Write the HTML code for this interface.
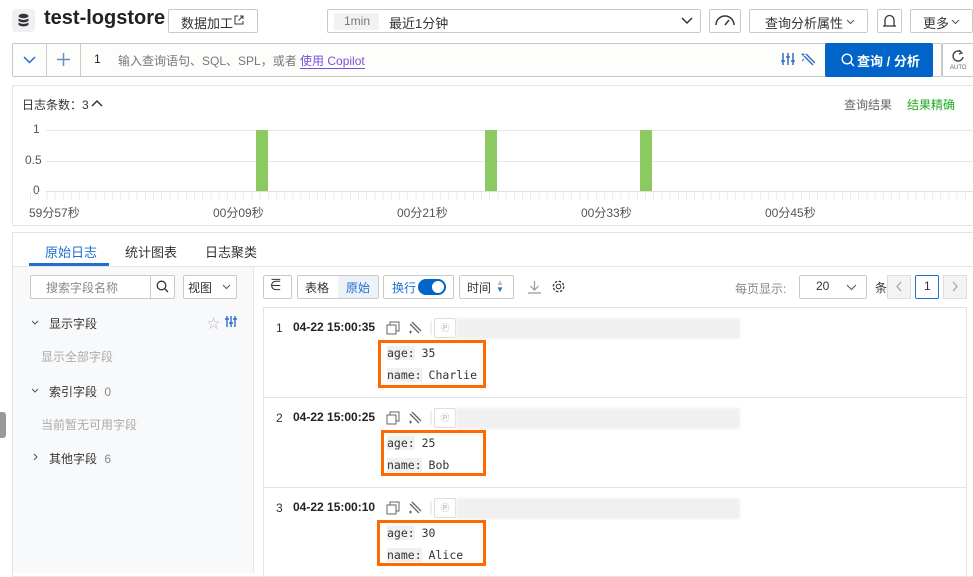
<!DOCTYPE html>
<html><head><meta charset="utf-8"><style>
*{box-sizing:border-box;margin:0;padding:0}
svg{display:block}
body{width:973px;height:573px;overflow:hidden;background:#fff;font-family:"Liberation Sans","Noto Sans CJK SC",sans-serif;font-size:12px;color:#333;position:relative}
.a{position:absolute}
.bx{position:absolute;border:1px solid #c9c9c9;background:#fff;border-radius:2px}
.t{position:absolute;white-space:nowrap}
.mono{font-family:"DejaVu Sans Mono","Liberation Mono",monospace;font-size:11.5px}
.k{background:#f0f0f0;color:#333}
.ob{position:absolute;border:3px solid #ff6a00}
.blur{position:absolute;background:#f0f0f0;filter:blur(1px);border-radius:2px}
</style></head><body>
<!-- header -->
<div class="a" style="left:12px;top:9px;width:23px;height:23px;background:#eef0f3;border-radius:4px"></div>
<svg class="a" style="left:17px;top:13px" width="13" height="15" viewBox="0 0 13 15"><ellipse cx="6.5" cy="3" rx="5" ry="2.2" fill="#333"/><path d="M1.5 5.5q5 3 10 0v2.5q-5 3-10 0zM1.5 9.5q5 3 10 0v2.5q-5 3-10 0z" fill="#333"/></svg>
<div class="t" style="left:44px;top:7px;font-size:20px;font-weight:bold;color:#222">test-logstore</div>
<div class="bx" style="left:168px;top:9px;width:90px;height:24px"></div>
<div class="t" style="left:181px;top:13px;font-size:13px">数据加工</div>
<svg class="a" style="left:234px;top:15px" width="10" height="10"><path d="M4 1H1v8h8V6M6 1h3v3M9 1L4.5 5.5" stroke="#333" fill="none"/></svg>
<div class="bx" style="left:327px;top:9px;width:374px;height:24px"></div>
<div class="a" style="left:334px;top:13px;width:45px;height:17px;background:#f2f2f2"></div>
<div class="t" style="left:344px;top:14px;font-size:12px;color:#777">1min</div>
<div class="t" style="left:389px;top:13px;font-size:13px">最近1分钟</div>
<svg class="a" style="left:681px;top:17px" width="12" height="8"><path d="M1 1l5 5 5-5" stroke="#333" stroke-width="1.5" fill="none"/></svg>
<div class="bx" style="left:709px;top:9px;width:32px;height:24px"></div>
<svg class="a" style="left:714px;top:13px" width="22" height="14"><path d="M2 12A9 9 0 0 1 20 12" stroke="#333" stroke-width="1.5" fill="none"/><path d="M11 12l4-5" stroke="#333" stroke-width="1.5"/></svg>
<div class="bx" style="left:749px;top:9px;width:119px;height:24px"></div>
<div class="t" style="left:765px;top:13px;font-size:13px">查询分析属性</div>
<svg class="a" style="left:846px;top:19px" width="9" height="6"><path d="M1 1l3.5 3.5L8 1" stroke="#555" fill="none"/></svg>
<div class="bx" style="left:877px;top:9px;width:25px;height:24px"></div>
<svg class="a" style="left:882px;top:13px" width="15" height="16"><path d="M3 13V7a4.5 4.5 0 0 1 9 0v6M1 13h13" stroke="#333" stroke-width="1.3" fill="none"/></svg>
<div class="bx" style="left:910px;top:9px;width:63px;height:24px"></div>
<div class="t" style="left:923px;top:13px;font-size:13px">更多</div>
<svg class="a" style="left:951px;top:19px" width="9" height="6"><path d="M1 1l3.5 3.5L8 1" stroke="#555" fill="none"/></svg>
<!-- query bar -->
<div class="bx" style="left:12px;top:43px;width:930px;height:34px;background:#fdfdfc"></div>
<div class="a" style="left:46px;top:44px;width:1px;height:32px;background:#ccc"></div>
<div class="a" style="left:80px;top:44px;width:1px;height:32px;background:#ccc"></div>
<svg class="a" style="left:23px;top:56px" width="13" height="8"><path d="M1 1l5.5 5.5L12 1" stroke="#1f6fd1" stroke-width="1.5" fill="none"/></svg>
<svg class="a" style="left:57px;top:53px" width="13" height="13"><path d="M6.5 0v13M0 6.5h13" stroke="#6b8cbf" stroke-width="1.5"/></svg>
<div class="t" style="left:94px;top:52px;font-size:12px;color:#223">1</div>
<div class="t" style="left:118px;top:52px;font-size:12px;color:#777">输入查询语句、SQL、SPL，或者 <span style="color:#7a4fd8;border-bottom:1px solid #7a4fd8">使用 Copilot</span></div>
<svg class="a" style="left:781px;top:52px" width="14" height="14"><path d="M2 1v12M7 1v12M12 1v12" stroke="#2f6fc6" stroke-width="1.5"/><path d="M0 9h4M5 5h4M10 9h4" stroke="#2f6fc6" stroke-width="1.5"/></svg>
<svg class="a" style="left:801px;top:52px" width="14" height="14"><path d="M3 4l9 9M5 2l9 9" stroke="#2f6fc6" stroke-width="1.5"/><path d="M1 9l2-2M2 1v3M0.5 2.5h3" stroke="#2f6fc6"/></svg>
<div class="a" style="left:825px;top:43px;width:108px;height:34px;background:#0064c8;border-radius:2px"></div>
<svg class="a" style="left:841px;top:53px" width="14" height="14"><circle cx="6" cy="6" r="4.8" stroke="#fff" stroke-width="1.4" fill="none"/><path d="M9.5 9.5L13 13" stroke="#fff" stroke-width="1.4"/></svg>
<div class="t" style="left:857px;top:51px;font-size:13px;color:#fff;font-weight:bold">查询 / 分析</div>
<div class="bx" style="left:942px;top:43px;width:40px;height:34px"></div>
<svg class="a" style="left:951px;top:49px" width="14" height="14"><path d="M11 4A5 5 0 1 0 12 8" stroke="#444" stroke-width="1.4" fill="none"/><path d="M8 1l3 3-3 1" stroke="#444" stroke-width="1.2" fill="none"/></svg>
<div class="t" style="left:950px;top:65px;font-size:6px;color:#666">AUTO</div>
<!-- chart -->
<div class="a" style="left:12px;top:85px;width:975px;height:141px;border:1px solid #e5e5e5"></div>
<div class="t" style="left:22px;top:96px;font-size:12px;color:#333">日志条数：3</div>
<svg class="a" style="left:91px;top:99px" width="12" height="8"><path d="M1 7l5-5 5 5" stroke="#333" stroke-width="1.5" fill="none"/></svg>
<div class="t" style="left:844px;top:96px;font-size:12px;color:#666">查询结果</div>
<div class="t" style="left:907px;top:96px;font-size:12px;color:#22aa22">结果精确</div>
<div class="t" style="left:33px;top:122px;color:#555">1</div>
<div class="t" style="left:25px;top:153px;color:#555">0.5</div>
<div class="t" style="left:33px;top:183px;color:#555">0</div>
<div class="a" style="left:46px;top:130px;width:927px;height:1px;background:#e8e8e8"></div>
<div class="a" style="left:46px;top:161px;width:927px;height:1px;background:#e8e8e8"></div>
<div class="a" style="left:46px;top:191px;width:927px;height:1px;background:#e0e0e0"></div>
<div class="a" style="left:30px;top:192px;width:943px;height:8px;background:repeating-linear-gradient(90deg,#eee 0 1px,transparent 1px 8.2px)"></div>
<div class="a" style="left:256px;top:130px;width:12px;height:61px;background:#8dc961"></div>
<div class="a" style="left:485px;top:130px;width:12px;height:61px;background:#8dc961"></div>
<div class="a" style="left:640px;top:130px;width:12px;height:61px;background:#8dc961"></div>
<div class="t" style="left:29px;top:204px;color:#555">59分57秒</div>
<div class="t" style="left:213px;top:204px;color:#555">00分09秒</div>
<div class="t" style="left:397px;top:204px;color:#555">00分21秒</div>
<div class="t" style="left:581px;top:204px;color:#555">00分33秒</div>
<div class="t" style="left:765px;top:204px;color:#555">00分45秒</div>
<!-- tabs -->
<div class="a" style="left:12px;top:232px;width:975px;height:345px;border:1px solid #e5e5e5"></div>
<div class="t" style="left:45px;top:242px;font-size:13px;color:#1f6fd1">原始日志</div>
<div class="t" style="left:125px;top:242px;font-size:13px">统计图表</div>
<div class="t" style="left:205px;top:242px;font-size:13px">日志聚类</div>
<div class="a" style="left:29px;top:263px;width:80px;height:3px;background:#1f6fd1"></div>
<div class="a" style="left:13px;top:266px;width:960px;height:1px;background:#e5e5e5"></div>
<!-- sidebar -->
<div class="a" style="left:13px;top:267px;width:240px;height:306px;background:#f8f9fb"></div>
<div class="a" style="left:253px;top:267px;width:1px;height:306px;background:#e5e5e5"></div>
<div class="a" style="left:0;top:412px;width:6px;height:26px;background:#999;border-radius:0 3px 3px 0"></div>
<div class="bx" style="left:30px;top:275px;width:145px;height:24px"></div>
<div class="a" style="left:150px;top:276px;width:1px;height:22px;background:#ccc"></div>
<div class="t" style="left:46px;top:279px;font-size:12px;color:#888">搜索字段名称</div>
<svg class="a" style="left:156px;top:280px" width="13" height="13"><circle cx="5.5" cy="5.5" r="4.3" stroke="#333" stroke-width="1.3" fill="none"/><path d="M8.7 8.7L12 12" stroke="#333" stroke-width="1.3"/></svg>
<div class="bx" style="left:183px;top:275px;width:54px;height:24px"></div>
<div class="t" style="left:188px;top:279px;font-size:12px">视图</div>
<svg class="a" style="left:222px;top:284px" width="9" height="6"><path d="M1 1l3.5 3.5L8 1" stroke="#555" fill="none"/></svg>
<svg class="a" style="left:31px;top:320px" width="8" height="6"><path d="M1 1l3 3 3-3" stroke="#555" fill="none"/></svg>
<div class="t" style="left:49px;top:315px;font-size:12px">显示字段</div>
<div class="t" style="left:207px;top:313px;font-size:13px;color:#bbb">☆</div>
<svg class="a" style="left:225px;top:315px" width="12" height="13"><path d="M2 1v11M6 1v11M10 1v11" stroke="#2f6fc6" stroke-width="1.4"/><path d="M0 4h4M4 8h4M8 4h4" stroke="#2f6fc6" stroke-width="1.4"/></svg>
<div class="t" style="left:41px;top:348px;font-size:12px;color:#aaa">显示全部字段</div>
<svg class="a" style="left:31px;top:388px" width="8" height="6"><path d="M1 1l3 3 3-3" stroke="#555" fill="none"/></svg>
<div class="t" style="left:49px;top:383px;font-size:12px">索引字段 <span style="color:#888;margin-left:4px">0</span></div>
<div class="t" style="left:41px;top:416px;font-size:12px;color:#aaa">当前暂无可用字段</div>
<svg class="a" style="left:33px;top:453px" width="6" height="8"><path d="M1 1l3 3-3 3" stroke="#555" fill="none"/></svg>
<div class="t" style="left:49px;top:450px;font-size:12px">其他字段 <span style="color:#888;margin-left:4px">6</span></div>
<!-- toolbar -->
<div class="bx" style="left:263px;top:275px;width:29px;height:24px"></div>
<div class="t" style="left:270px;top:278px;font-size:13px">⋶</div>
<div class="bx" style="left:297px;top:275px;width:82px;height:24px"></div>
<div class="a" style="left:338px;top:276px;width:40px;height:22px;background:#eef2f8"></div>
<div class="t" style="left:305px;top:279px">表格</div>
<div class="t" style="left:346px;top:279px;color:#1f6fd1">原始</div>
<div class="bx" style="left:383px;top:275px;width:71px;height:24px"></div>
<div class="t" style="left:392px;top:279px;color:#1f6fd1">换行</div>
<div class="a" style="left:418px;top:279px;width:28px;height:16px;background:#0064c8;border-radius:8px"></div>
<div class="a" style="left:432px;top:281px;width:12px;height:12px;background:#fff;border-radius:6px"></div>
<div class="bx" style="left:459px;top:275px;width:55px;height:24px"></div>
<div class="t" style="left:467px;top:279px">时间</div>
<div class="t" style="left:496px;top:279px;font-size:8px;line-height:7px;color:#1f6fd1"><span style="color:#bbb">▲</span><br>▼</div>
<svg class="a" style="left:527px;top:280px" width="15" height="14"><path d="M7.5 1v9M3.5 6l4 4 4-4M1 13h13" stroke="#999" stroke-width="1.2" fill="none"/></svg>
<svg class="a" style="left:551px;top:279px" width="15" height="15"><circle cx="7.5" cy="7.5" r="2.3" stroke="#333" fill="none"/><circle cx="7.5" cy="7.5" r="5.2" stroke="#333" stroke-width="1.3" stroke-dasharray="2.5 1.6" fill="none"/></svg>
<div class="t" style="left:735px;top:280px;color:#888">每页显示:</div>
<div class="bx" style="left:799px;top:275px;width:68px;height:24px"></div>
<div class="t" style="left:816px;top:279px">20</div>
<svg class="a" style="left:846px;top:284px" width="11" height="7"><path d="M1 1l4.5 4.5L10 1" stroke="#555" fill="none"/></svg>
<div class="t" style="left:875px;top:279px">条</div>
<div class="a" style="left:887px;top:275px;width:24px;height:24px;background:#f3f3f3;border:1px solid #ddd"></div>
<svg class="a" style="left:896px;top:281px" width="6" height="11"><path d="M5 1L1 5.5 5 10" stroke="#999" fill="none"/></svg>
<div class="a" style="left:915px;top:275px;width:24px;height:24px;border:1px solid #1f6fd1;border-radius:2px"></div>
<div class="t" style="left:924px;top:279px">1</div>
<div class="a" style="left:943px;top:275px;width:24px;height:24px;background:#f3f3f3;border:1px solid #ddd"></div>
<svg class="a" style="left:952px;top:281px" width="6" height="11"><path d="M1 1l4 4.5L1 10" stroke="#999" fill="none"/></svg>
<!-- log list -->
<div class="a" style="left:263px;top:307px;width:704px;height:270px;border:1px solid #e3e3e3"></div>
<div class="a" style="left:264px;top:397px;width:702px;height:1px;background:#e3e3e3"></div>
<div class="a" style="left:264px;top:487px;width:702px;height:1px;background:#e3e3e3"></div>

<div class="t" style="left:276px;top:321px;color:#333">1</div>
<div class="t" style="left:293px;top:320px;font-weight:bold;color:#222">04-22 15:00:35</div>
<div class="t" style="left:276px;top:411px;color:#333">2</div>
<div class="t" style="left:293px;top:410px;font-weight:bold;color:#222">04-22 15:00:25</div>
<div class="t" style="left:276px;top:501px;color:#333">3</div>
<div class="t" style="left:293px;top:500px;font-weight:bold;color:#222">04-22 15:00:10</div>

<svg class="a" style="left:386px;top:320px" width="50" height="16"><rect x="1" y="5" width="9" height="9" stroke="#666" fill="none"/><path d="M4 5V2h9v9h-3" stroke="#666" fill="none"/><path d="M24 4l9 9M26 2l9 9" stroke="#666" stroke-width="1.3"/><path d="M23 12h3M24.5 10.5v3" stroke="#666"/><path d="M45 1v14" stroke="#ddd"/></svg>
<svg class="a" style="left:386px;top:410px" width="50" height="16"><rect x="1" y="5" width="9" height="9" stroke="#666" fill="none"/><path d="M4 5V2h9v9h-3" stroke="#666" fill="none"/><path d="M24 4l9 9M26 2l9 9" stroke="#666" stroke-width="1.3"/><path d="M23 12h3M24.5 10.5v3" stroke="#666"/><path d="M45 1v14" stroke="#ddd"/></svg>
<svg class="a" style="left:386px;top:500px" width="50" height="16"><rect x="1" y="5" width="9" height="9" stroke="#666" fill="none"/><path d="M4 5V2h9v9h-3" stroke="#666" fill="none"/><path d="M24 4l9 9M26 2l9 9" stroke="#666" stroke-width="1.3"/><path d="M23 12h3M24.5 10.5v3" stroke="#666"/><path d="M45 1v14" stroke="#ddd"/></svg>
<div class="a" style="left:434px;top:318px;width:22px;height:20px;border:1px solid #ddd;border-radius:2px;color:#aaa;font-size:9px;text-align:center;line-height:18px">Ⓟ</div>
<div class="a" style="left:434px;top:408px;width:22px;height:20px;border:1px solid #ddd;border-radius:2px;color:#aaa;font-size:9px;text-align:center;line-height:18px">Ⓟ</div>
<div class="a" style="left:434px;top:498px;width:22px;height:20px;border:1px solid #ddd;border-radius:2px;color:#aaa;font-size:9px;text-align:center;line-height:18px">Ⓟ</div>
<div class="blur" style="left:456px;top:318px;width:284px;height:21px"></div>
<div class="blur" style="left:456px;top:408px;width:284px;height:21px"></div>
<div class="blur" style="left:456px;top:498px;width:284px;height:21px"></div>

<div class="ob" style="left:378px;top:340px;width:108px;height:48px"></div>
<div class="t mono" style="left:387px;top:346px"><span class="k">age:</span> 35</div>
<div class="t mono" style="left:387px;top:368px"><span class="k">name:</span> Charlie</div>
<div class="ob" style="left:381px;top:430px;width:105px;height:46px"></div>
<div class="t mono" style="left:387px;top:436px"><span class="k">age:</span> 25</div>
<div class="t mono" style="left:387px;top:458px"><span class="k">name:</span> Bob</div>
<div class="ob" style="left:377px;top:520px;width:109px;height:46px"></div>
<div class="t mono" style="left:387px;top:526px"><span class="k">age:</span> 30</div>
<div class="t mono" style="left:387px;top:548px"><span class="k">name:</span> Alice</div>
</body></html>
